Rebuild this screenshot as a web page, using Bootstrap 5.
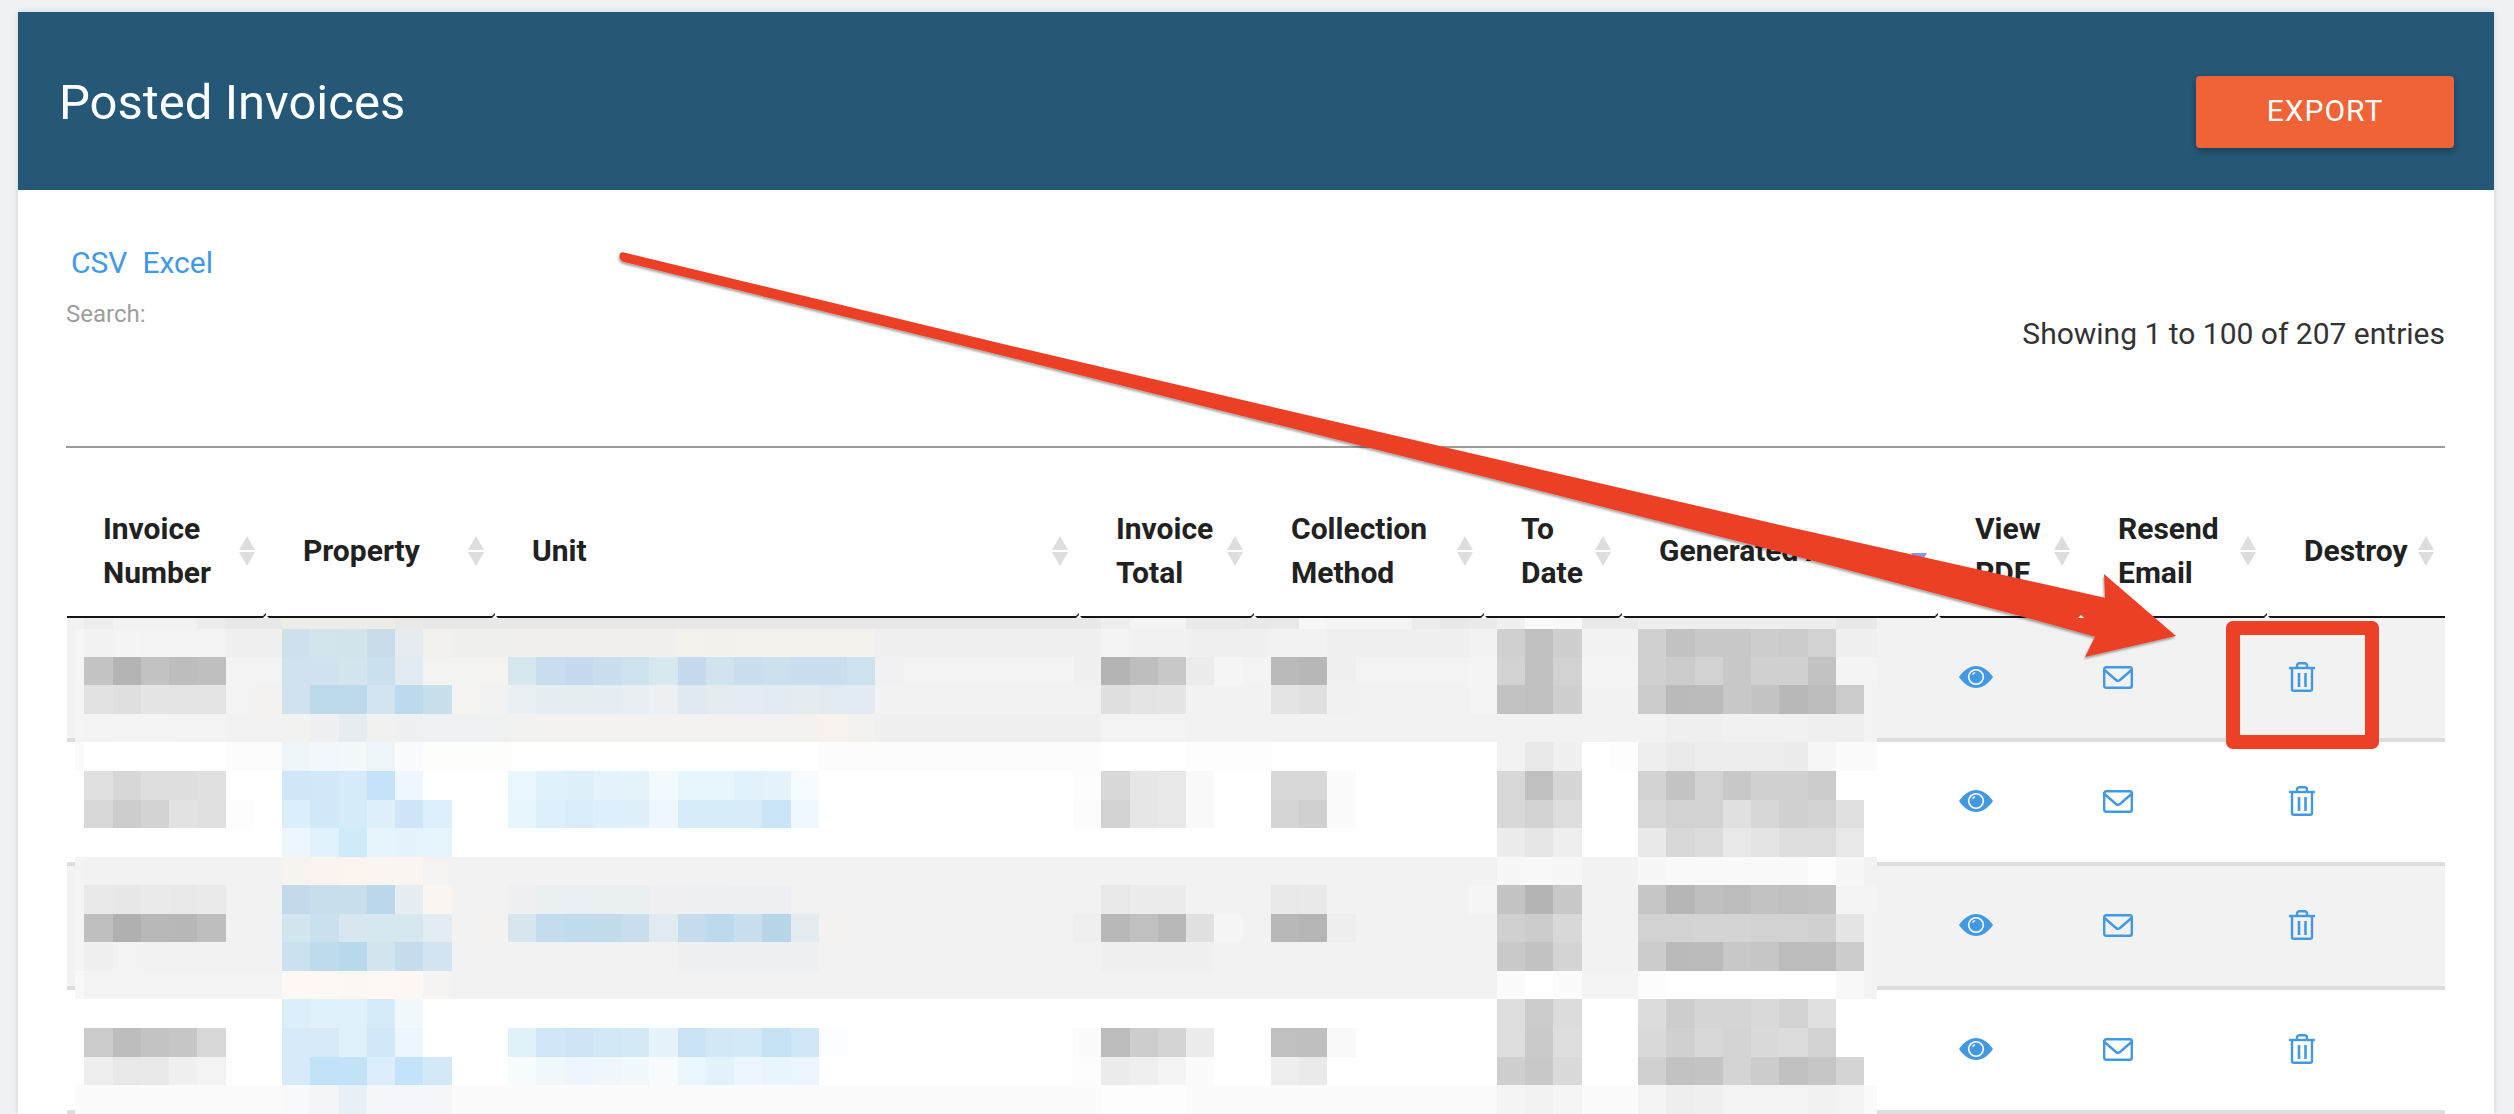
<!DOCTYPE html>
<html lang="en">
<head>
<meta charset="utf-8">
<title>Posted Invoices</title>
<link href="https://cdn.jsdelivr.net/npm/bootstrap@5.3.0/dist/css/bootstrap.min.css" rel="stylesheet">
<style>
html,body{margin:0;background:#eef2f5;font-family:Roboto,"Liberation Sans",sans-serif;color:#333}
body{position:relative;width:2514px;height:1114px;overflow:hidden}
.sheet{margin:12px 20px 0 18px;background:#fff;box-shadow:0 0 6px rgba(0,0,0,.14);border-radius:0;border:0}
.sheet-head{background:#255777;padding:64px 40px 42px 41px;border:0;border-radius:0!important;height:178px}
.sheet-title{font-size:49px;line-height:54px;font-weight:400;color:#fff;margin:0}
.export-btn{width:258px;height:72px;background:#ef6337;border:0;border-radius:4px;color:#fff;font-size:30px;line-height:34px;letter-spacing:1px;box-shadow:0 3px 6px rgba(0,0,0,.3);padding:0 0 3px}
.sheet-main{padding:0 49px 0 48px}
.dl-links{padding:55px 0 0 5px;font-size:30px;line-height:36px;gap:15px}
.dl-links a{color:#3f9ae5;text-decoration:none}
.search-label{font-size:24px;line-height:28px;color:#9e9e9e;margin:0;padding-top:19px}
.entries-info{font-size:30px;line-height:34px;color:#333;padding:36px 0 95px}
.tbl-rule{margin:0;height:2px;border:0;background:#9c9c9c;opacity:1}
.tbl-wrap{position:relative;margin:38px 0 0 1px}
.inv-table{--bs-table-striped-bg:#f2f2f2;--bs-table-bg:#fff;--bs-table-striped-color:#333;table-layout:fixed;border-collapse:separate;border-spacing:0;width:2378px;margin:0}
.inv-table>thead>tr>th{position:relative;height:132px;padding:0 11px 0 37px;border-bottom:2px solid #151515;font-size:30px;line-height:44px;font-weight:700;color:#212121;vertical-align:middle}
.inv-table>thead>tr>th:first-child{padding-left:36px}
.inv-table>thead>tr>th:not(:last-child)::after{content:"";position:absolute;right:-5px;bottom:-2px;width:10px;height:5px;background:#222;clip-path:polygon(50% 0,100% 100%,0 100%)}
.inv-table>thead>tr>th:not(:last-child)::before{content:"";position:absolute;right:-3px;bottom:-2px;width:6px;height:3px;background:#fff;clip-path:polygon(50% 0,100% 100%,0 100%);z-index:1}
.inv-table>tbody>tr>td{height:124px;padding:0 0 2px 21px;border-bottom:4px solid #ddd;vertical-align:middle;line-height:1}
.w1{width:199px}.w2{width:229px}.w3{width:584px}.w4{width:175px}.w5{width:230px}.w6{width:138px}.w7{width:316px}.w8{width:143px}.w9{width:186px}.w10{width:178px}
.sort-ico{width:16px;height:30px;flex:none;fill:#ddd}
.sort-active{fill:#8a94e6}
.act-ico{display:inline-block;vertical-align:middle;color:#4299e1}
.ico-eye{width:34px;height:22px}
.ico-mail{width:30px;height:23px;margin-left:1px}
.ico-trash{width:26px;height:30px;margin-left:1px}
.mosaic{position:absolute;left:8px;top:132px;width:1802px;height:496px;pointer-events:none}
.markup{position:absolute;left:0;top:0;width:2514px;height:1114px;pointer-events:none}
</style>
</head>
<body>
<svg width="0" height="0" class="position-absolute">
  <symbol id="i-eye" viewBox="0 0 34 22"><path fill="currentColor" d="M0 11C5 4 10.500 0 17 0s12 4 17 11c-5 7-10.500 11-17 11S5 18 0 11z"/><circle cx="17" cy="11" r="7.300" fill="currentColor" stroke="#fff" stroke-width="1.600"/><path d="M13.600 8.600a4.300 4.300 0 0 1 2.600-2" fill="none" stroke="#fff" stroke-width="1.500"/></symbol>
  <symbol id="i-mail" viewBox="0 0 30 23"><rect x="1.200" y="1.200" width="27.600" height="20.600" rx="2" fill="none" stroke="currentColor" stroke-width="2.400"/><path d="M1.500 4l11.500 10c1.200 1 2.800 1 4 0L28.500 4" fill="none" stroke="currentColor" stroke-width="2.400"/></symbol>
  <symbol id="i-trash" viewBox="0 0 26 30"><path d="M0 6h26" stroke="currentColor" stroke-width="2.400" fill="none"/><path d="M8 6V3.500C8 2 9 1.200 10.500 1.200h5C17 1.200 18 2 18 3.500V6" fill="none" stroke="currentColor" stroke-width="2.400"/><path d="M3 6v21c0 1.200.8 1.800 2 1.800h16c1.200 0 2-.6 2-1.800V6" fill="none" stroke="currentColor" stroke-width="2.400"/><path d="M10 11v14M16.500 11v14" stroke="currentColor" stroke-width="2.600" fill="none"/></symbol>
</svg>

<div class="card sheet">
  <div class="card-header sheet-head d-flex justify-content-between align-items-start">
    <h1 class="sheet-title">Posted Invoices</h1>
    <button type="button" class="btn export-btn">EXPORT</button>
  </div>
  <div class="card-body sheet-main">
    <div class="dl-links d-flex"><a href="#">CSV</a><a href="#">Excel</a></div>
    <div class="d-flex justify-content-between align-items-start tools-row">
      <label class="search-label">Search:</label>
      <div class="entries-info">Showing 1 to 100 of 207 entries</div>
    </div>
    <hr class="tbl-rule" id="rule">
    <div class="tbl-wrap">
      <table class="table table-striped inv-table">
        <colgroup><col class="w1"><col class="w2"><col class="w3"><col class="w4"><col class="w5"><col class="w6"><col class="w7"><col class="w8"><col class="w9"><col class="w10"></colgroup>
        <thead>
          <tr>
            <th><div class="d-flex justify-content-between align-items-center"><span>Invoice<br>Number</span><svg class="sort-ico" viewBox="0 0 16 30"><path d="M8 0l8 14H0zM0 16h16l-8 14z"/></svg></div></th>
            <th><div class="d-flex justify-content-between align-items-center"><span>Property</span><svg class="sort-ico" viewBox="0 0 16 30"><path d="M8 0l8 14H0zM0 16h16l-8 14z"/></svg></div></th>
            <th><div class="d-flex justify-content-between align-items-center"><span>Unit</span><svg class="sort-ico" viewBox="0 0 16 30"><path d="M8 0l8 14H0zM0 16h16l-8 14z"/></svg></div></th>
            <th><div class="d-flex justify-content-between align-items-center"><span>Invoice<br>Total</span><svg class="sort-ico" viewBox="0 0 16 30"><path d="M8 0l8 14H0zM0 16h16l-8 14z"/></svg></div></th>
            <th><div class="d-flex justify-content-between align-items-center"><span>Collection<br>Method</span><svg class="sort-ico" viewBox="0 0 16 30"><path d="M8 0l8 14H0zM0 16h16l-8 14z"/></svg></div></th>
            <th><div class="d-flex justify-content-between align-items-center"><span>To<br>Date</span><svg class="sort-ico" viewBox="0 0 16 30"><path d="M8 0l8 14H0zM0 16h16l-8 14z"/></svg></div></th>
            <th><div class="d-flex justify-content-between align-items-center"><span>Generated At</span><svg class="sort-ico" viewBox="0 0 16 30"><path class="sort-active" d="M0 17h16l-8 14z"/></svg></div></th>
            <th><div class="d-flex justify-content-between align-items-center"><span>View<br>PDF</span><svg class="sort-ico" viewBox="0 0 16 30"><path d="M8 0l8 14H0zM0 16h16l-8 14z"/></svg></div></th>
            <th><div class="d-flex justify-content-between align-items-center"><span>Resend<br>Email</span><svg class="sort-ico" viewBox="0 0 16 30"><path d="M8 0l8 14H0zM0 16h16l-8 14z"/></svg></div></th>
            <th><div class="d-flex justify-content-between align-items-center"><span>Destroy</span><svg class="sort-ico" viewBox="0 0 16 30"><path d="M8 0l8 14H0zM0 16h16l-8 14z"/></svg></div></th>
          </tr>
        </thead>
        <tbody>
          <tr><td colspan="7"></td><td><svg class="act-ico ico-eye"><use href="#i-eye"/></svg></td><td><svg class="act-ico ico-mail"><use href="#i-mail"/></svg></td><td><svg class="act-ico ico-trash"><use href="#i-trash"/></svg></td></tr>
          <tr><td colspan="7"></td><td><svg class="act-ico ico-eye"><use href="#i-eye"/></svg></td><td><svg class="act-ico ico-mail"><use href="#i-mail"/></svg></td><td><svg class="act-ico ico-trash"><use href="#i-trash"/></svg></td></tr>
          <tr><td colspan="7"></td><td><svg class="act-ico ico-eye"><use href="#i-eye"/></svg></td><td><svg class="act-ico ico-mail"><use href="#i-mail"/></svg></td><td><svg class="act-ico ico-trash"><use href="#i-trash"/></svg></td></tr>
          <tr><td colspan="7"></td><td><svg class="act-ico ico-eye"><use href="#i-eye"/></svg></td><td><svg class="act-ico ico-mail"><use href="#i-mail"/></svg></td><td><svg class="act-ico ico-trash"><use href="#i-trash"/></svg></td></tr>
        </tbody>
      </table>
      <svg class="mosaic" id="mosaic" viewBox="75 618 1802 496" shape-rendering="crispEdges"></svg>
    </div>
  </div>
</div>

<svg class="markup" viewBox="0 0 2514 1114">
  <defs><filter id="ds" x="-2%" y="-5%" width="104%" height="110%"><feDropShadow dx="-1" dy="2" stdDeviation="1.200" flood-color="#000" flood-opacity=".35"/></filter></defs>
  <path filter="url(#ds)" fill="#ec4126" d="M624 252.500L1000 343.300L1500 460L1780 525L2105 597.700L2104 574L2176 636L2085 657L2095 636.700L2023 616.700L1780 552L1500 480.700L1000 355L624 262C618 260 618 251 624 252.500Z"/>
  <rect x="2233" y="628" width="139" height="114" fill="none" stroke="#ec4126" stroke-width="14" stroke-linejoin="round"/>
</svg>

<script>
var MOSAIC=[
[618,"e8","-1:f2 ee f2 f2 f2 ec|7:efebe7 efebe7 efebe7 efebe7 ebe9e7|36:ee f4 f4 ea ea|42:e9 f6 f4 f4 f4 ec e8 ea f0 fa f8 e9 e9 ee ee ee ee ee ee ee e8 e8"],
[629,"f0","-1:f6 f2 f4 f3 f3 f3 f0 f0 cde0ec d3e4ed d3e3ec c9dcea e5ebef f2f1ee f0f0ef f0f0ef f2f0ee f2f0ee f2f0ee f2f0ee f2f0ee f2f0ee f5f2ee f2f1ee f5f1ed f5f1ed f5f1ed f5f1ed f5f1ed|36:f4 f1 f1 f0 f0 f0 f2 f2|49:f2 d0 c0 cf f2 f2 d0 c2 c8 c8 cd cb d2 f0 f0"],
[657,"f3","-1:f5 c4 b4 c2 bd bf f3 f3 cfe2ee cfe2ee d5e5ed cae0ee e2eaf2 f3f3f2 f3f3f2 f5f3f0 d6e7ef c6deee c4daee c8dfee cce2ee d8e8ef c4daee d0e3ee c8dfee cbe1ed c8dfef c8dfef cce3ef f1f1f3|35:f0 b4 be c8 ec f5 f3 ba b7 f0|49:f4 d2 c0 d2 f4 f4 d0 cb d2 c8 d0 d0 c2 f4 f4"],
[685,"f2","-1:f4 e2 df e5 e4 e4 f3 f3f2f0 cfe2ee bcd9ec bcd9ec d2e4ef bcdaed c8e0ec f4f3f0 f2 e9eff3 e5edf0 e6edf0 e6edf0 e8eef2 ecf0f2 e0e9f1 e5ecf0 e4ebf2 e3ebf2 e4ecf1 e1e9f1 e3ebf2|36:df e4 e5|42:e4 e0 f1|49:f4 c2 c0 cf f2 f2 cb ba bb c8 c4 b8 bc cb f3"],
[714,"f2","-1:f4 f3 f4 f4 f3 f3 f2 f2 f2f2f0 eff0f2 e6edf0 f1f2f0 eff0f2 f0f1f2 f0f1f2 f0f1f2 f2f2f1 f4f2f0 f4f2f0 f4f2f0 f4f2f0 f4f2f0 f4f2f0 f4f2f0 f4f2f0 f4f2f0 f3f2ef f7f2ee f4f2ef f0 f0 f0 f0 f0 f0 f0 f0|36:f3 f3 f3 f2 f2 f2|55:f2 ef ef f1 f1 f1 ef ef f3"],
[742,"fe","-1:fa ff ff ff ff ff fc fc edf5f8 f2f7fb f3f8fb edf5f8 f9fbfd fdfdfc fdfdfc fdfdfc|26:fc fc fc fc fc fc fc fc fc fc|36:ff ff ff fd fd fd|50:f2 e8 f0 ff fd ee ea ed ed ed ec f6 fb fb"],
[771,"ff","0:e0 d7 de de e0|7:cfe7f8 d0e8f8 d6ebf9 c4e3f8 eff7fe|15:e9f6fc e1f1fb def0fa e4f3fb e5f4fb f2fafd e7f5fc e7f5fc e1f2fc e4f2fb f5fbfe|35:fd d8 e6 e8 f9|42:d8 d8 fb|50:d8 c0 d6|55:d3 c4 d2 c8 d0 d0 cc"],
[800,"ff","0:d8 cd d3 e2 e0 fd|7:dbeffa d0e8f8 d6ebf9 e0f0fa cfe5f9 dcf0fb|15:e7f5fd dceffb d8ecfa ddf0fb dff0fa eff7fe d6ecf9 d6ecf9 d6ecf9 cae5f8 eff8fe|35:fc d2 e6 e8 f9|42:d5 d0 fb|50:d8 d2 de|55:d8 d2 d2 e0 d7 d0 d2 e0"],
[828,"fe","7:ebf6fd e0f2fb cfeaf8 e6f4fc e4f3fc e6f5fc|50:ec e6 ee|55:e9 d8 dc e8 e4 dd dd e8"],
[857,"f2","-1:f4|7:f7f3ef f9f4ef fbf5f0 faf5f1 faf5f1 f4f3f1|50:f7 f8 f7|55:f7 f9 f9 f9 f9 f9 fd f7"],
[885,"f2","-1:f4 e9 e7 ea e8 ea|7:c2daeb c8deed c8deed b9d8ec e5edf0 faf5f1|15:eff0f2 eaeff2 e9eff2 eaeff2 eaeff2 f0f0f2 eef0f2 eef0f2 ecf0f3 eeeff2|36:e8 ec ec f2|42:e8 e9|49:f5 c4 b4 c8|55:c6 b6 bf bc c2 c0 c4 f4 f4"],
[914,"f2","-1:f4 bf b0 b8 b7 be|7:d3e5ef cbe0ee d7e6ef d6e7ef d6e7ef e4ecf3 f2 f4f2f0 d7e6ee c4dced c0dcee c3dcec c8deec e0ebf1 c4dcec bcdaee c8dfed b8d6ea e4ecf0 f3f2f0|35:ef b8 c0 b8 e1 f5 f2 b8 b5 ee|50:d0 cc d8|55:d2 d2 d4 d4 d2 d2 d0 e5 f3"],
[942,"f2","-1:f4 f0 f3|7:cce1ef bedbed b8d8eb d3e5ef c4dcee d2e4f1|21:eff0f2 eff0f2 eff0f2 eff0f2 eff0f2|36:f0 f0 f0 f0|50:c9 c2 d4|55:cc ba bb c8 c6 bc bc cc f3"],
[971,"f2","-1:f8 f3 f3 f3 f3 f3 f3 f3 fdf8f4 fdf8f4 fdf7f3 fdf8f4 fdf7f3 f5f4f3|50:fb ff fb f3 f3 fc ff ff ff ff ff ff f8 f3"],
[999,"ff","7:dbeefa e0f1fb e0f1fb d6ebf9 f2f9fd|50:de cb dc|55:dc cd d5 d5 d9 d2 e0"],
[1028,"fe","0:cb bd c4 c6 d8|7:d6eaf9 d6eaf9 e0f1fb d1e8f8 ebf7fc|15:e0f1fa cfe7f7 cfe5f5 d1e8f7 d4eaf7 e6f3fb cbe3f7 d2e8f7 d4e9f8 c6e3f5 d0e7f8 fcfdfe|35:fb bc cd d4 ec|42:c0 bf f9|50:de ca de|55:da d0 d8 d4 da dc d2"],
[1057,"fe","0:ee e8 e9 f0 f3|7:d6eafa c2e3f7 c2e3f7 dcedfb c2e3f8 d4e9f8|15:f7fcfe f0f8fc eef6fd eff7fd f2f9fc f9fcfe eaf6fd e1f2fa ecf6fc e8f5fc ebf6fc|35:fd ec ef f4 fb|42:ee ea|50:cf c8 da|55:d0 c2 c4 d4 cc c0 c6 d4"],
[1085,"fb","7:f8f9fa f2f6f9 e8f0f7 f3f7fa f3f6fa f3f7fa|36:fd fd fd|50:f4 f2 f5|55:f4 ee f0 f3 f3 f3 f1 f3 fa"]
];
(function(){
  var svg=document.getElementById('mosaic'),NS='http://www.w3.org/2000/svg',L=75,R=1877,END=1114;
  function col(t){return '#'+(t.length===2?t+t+t:t);}
  function X(k){return Math.max(L,Math.min(R,Math.round(84.3+28.25*k)));}
  function rect(x,y,w,h,f){var r=document.createElementNS(NS,'rect');r.setAttribute('x',x);r.setAttribute('y',y);r.setAttribute('width',w);r.setAttribute('height',h);r.setAttribute('fill',f);svg.appendChild(r);}
  MOSAIC.forEach(function(row,i){
    var y=row[0],h=(i+1<MOSAIC.length?MOSAIC[i+1][0]:END)-y;
    rect(L,y,R-L,h,col(row[1]));
    row[2].split('|').forEach(function(seg){
      var p=seg.split(':'),k=parseInt(p[0],10);
      p[1].split(' ').forEach(function(t,j){
        var a=X(k+j),b=X(k+j+1);
        if(b>a)rect(a,y,b-a,h,col(t));
      });
    });
  });
})();
</script>
<script src="https://cdn.jsdelivr.net/npm/bootstrap@5.3.0/dist/js/bootstrap.bundle.min.js"></script>
</body>
</html>
